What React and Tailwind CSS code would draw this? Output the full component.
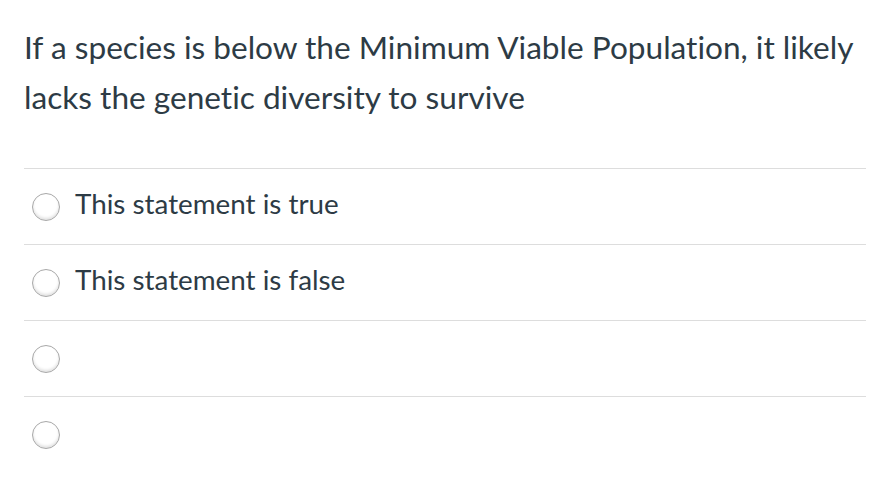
import React from 'react';

const options = ['This statement is true', 'This statement is false', '', ''];

const Radio = () => (
    <span className="inline-block w-[28px] h-[28px] rounded-full border border-[#a8a8a8] bg-white shadow-[inset_0_-2px_3px_rgba(0,0,0,0.12)] shrink-0"></span>
);

export default function App() {
    return (
        <div className="w-[892px] h-[488px] bg-white font-['Lato','Noto_Sans',sans-serif] text-[#2d3b45] [font-variant-ligatures:none]">
            <div className="pl-[24px] pr-[26px] pt-[22px]">
                <p className="text-[31.6px] leading-[50px]">
                    If a species is below the Minimum Viable Population, it likely lacks the genetic diversity to survive
                </p>
                <div className="mt-[46px]">
                    {options.map((opt, i) => (
                        <div key={i} className="border-t border-[#dddddd] h-[76px] flex items-center gap-[15px] pl-[8px]">
                            <Radio />
                            <span className="text-[27.8px] leading-none -mt-[5px]">{opt}</span>
                        </div>
                    ))}
                </div>
            </div>
        </div>
    );
}
